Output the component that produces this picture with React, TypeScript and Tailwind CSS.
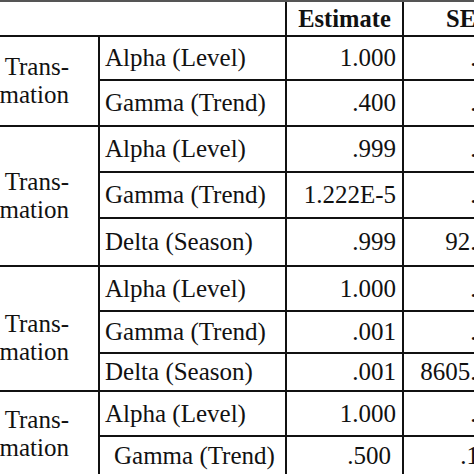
import React from "react";

type Row = { label: string; est: string; se: string; h: string; last?: boolean };
type Group = { rows: Row[]; shift?: string; end?: boolean };

// 各组数据（SE 列超出画面的部分会被裁掉）
const groups: Group[] = [
  {
    rows: [
      { label: "Alpha (Level)", est: "1.000", se: ".047", h: "h-[42px]" },
      { label: "Gamma (Trend)", est: ".400", se: ".215", h: "h-[44px]" },
    ],
  },
  {
    rows: [
      { label: "Alpha (Level)", est: ".999", se: ".039", h: "h-[44px]" },
      { label: "Gamma (Trend)", est: "1.222E-5", se: ".000", h: "h-[44px]" },
      { label: "Delta (Season)", est: ".999", se: "92.415", h: "h-[46px]" },
    ],
  },
  {
    shift: "pt-[18px]",
    rows: [
      { label: "Alpha (Level)", est: "1.000", se: ".061", h: "h-[43px]" },
      { label: "Gamma (Trend)", est: ".001", se: ".102", h: "h-[40px]" },
      { label: "Delta (Season)", est: ".001", se: "8605.216", h: "h-[36px]" },
    ],
  },
  {
    end: true,
    rows: [
      { label: "Alpha (Level)", est: "1.000", se: ".058", h: "h-[43px]" },
      { label: "Gamma (Trend)", est: ".500", se: ".143", h: "h-[38px]", last: true },
    ],
  },
];

function DataRow({ row, border }: { row: Row; border: boolean }) {
  return (
    <div className={`flex ${row.h} ${border ? "border-b-2 border-[#111]" : ""} box-content`}>
      <div
        className={`w-[187px] shrink-0 flex items-center border-r-2 border-[#111] whitespace-nowrap overflow-hidden ${
          row.last ? "pl-[14px]" : "pl-[5px]"
        }`}
      >
        {row.label}
      </div>
      <div
        className={`w-[117px] shrink-0 flex items-center justify-end border-r-2 border-[#111] whitespace-nowrap ${
          row.last ? "pr-[11px]" : "pr-[6px]"
        }`}
      >
        {row.est}
      </div>
      <div
        className={`w-[116px] shrink-0 flex items-center justify-end border-r-2 border-[#111] whitespace-nowrap ${
          row.last ? "pr-[14px]" : "pr-[4px]"
        }`}
      >
        {row.se}
      </div>
    </div>
  );
}

export default function App() {
  return (
    <div className="w-[474px] h-[474px] overflow-hidden bg-white">
      <div
        className="w-[520px] text-[25px] leading-[28px] text-[#111]"
        style={{ fontFamily: '"Liberation Serif", "Times New Roman", serif' }}
      >
        {/* 表头 */}
        <div className="flex h-[37px] border-t-2 border-t-[#555] border-b-2 border-b-[#111]">
          <div className="w-[287px] shrink-0 border-r-2 border-[#111]" />
          <div className="w-[117px] shrink-0 flex items-center justify-center font-bold text-[24.5px] border-r-2 border-[#111]">
            Estimate
          </div>
          <div className="w-[116px] shrink-0 flex items-center justify-center font-bold text-[24.5px] border-r-2 border-[#111]">
            SE
          </div>
        </div>

        {groups.map((g, gi) => (
          <div key={gi} className={`flex ${g.end ? "" : "border-b-2 border-[#111]"}`}>
            <div
              className={`w-[100px] shrink-0 flex flex-col items-end justify-center pr-[29px] border-r-2 border-[#111] overflow-hidden ${
                g.shift ?? ""
              }`}
            >
              <span className="whitespace-nowrap">Trans-</span>
              <span className="whitespace-nowrap">formation</span>
            </div>
            <div className="flex flex-col">
              {g.rows.map((r, ri) => (
                <DataRow key={ri} row={r} border={ri < g.rows.length - 1} />
              ))}
            </div>
          </div>
        ))}
      </div>
    </div>
  );
}
